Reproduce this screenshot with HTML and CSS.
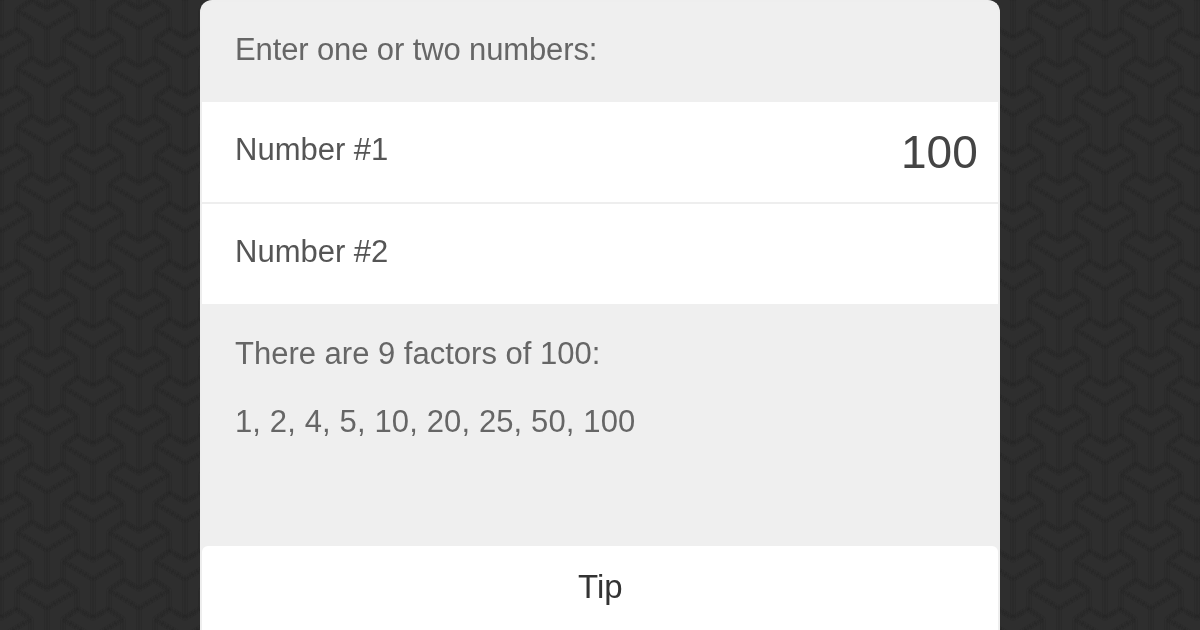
FILE: index.html
```html
<!DOCTYPE html>
<html lang="en">
<head>
<meta charset="utf-8">
<title>Factors</title>
<link rel="stylesheet" href="styles.css">
</head>
<body>
<main class="card">
  <header class="section head"><p class="note note-enter">Enter one or two numbers:</p></header>
  <div class="row row-line"><label class="label">Number #1</label><span class="value">100</span></div>
  <div class="row"><label class="label">Number #2</label></div>
  <section class="section result">
    <p class="note">There are 9 factors of 100:</p>
    <p class="note list">1, 2, 4, 5, 10, 20, 25, 50, 100</p>
  </section>
  <div class="tip"><span class="tip-text">Tip</span></div>
</main>
</body>
</html>
```
FILE: styles.css
```css
html, body { margin: 0; height: 630px; overflow: hidden; }
body {
  font-family: "Liberation Sans", Arial, sans-serif;
  background-color: #2e2e2e;
  background-image: url("data:image/svg+xml,%3Csvg xmlns='http://www.w3.org/2000/svg' xmlns:xlink='http://www.w3.org/1999/xlink' width='92' height='58' viewBox='0 0 92 58'%3E%3Cdefs%3E%3Cfilter id='b' filterUnits='userSpaceOnUse' x='-100' y='-100' width='300' height='300'%3E%3CfeGaussianBlur stdDeviation='0.9'/%3E%3C/filter%3E%3Cpath id='t' d='M0 0L-30 -18M0 0L30 -18M0 0V38M-30 -18V1M30 -18V1M-30 -18L-15 -28L0 -19L15 -28L30 -18'/%3E%3C/defs%3E%3Cg fill='none' stroke='%23252525' stroke-width='2' filter='url(%23b)'%3E%3Cuse href='%23t' x='47' y='28'/%3E%3Cuse href='%23t' x='-45' y='28'/%3E%3Cuse href='%23t' x='139' y='28'/%3E%3Cuse href='%23t' x='47' y='-30'/%3E%3Cuse href='%23t' x='-45' y='-30'/%3E%3Cuse href='%23t' x='139' y='-30'/%3E%3Cuse href='%23t' x='47' y='86'/%3E%3Cuse href='%23t' x='-45' y='86'/%3E%3Cuse href='%23t' x='139' y='86'/%3E%3Cuse href='%23t' x='1' y='-1'/%3E%3Cuse href='%23t' x='93' y='-1'/%3E%3Cuse href='%23t' x='1' y='57'/%3E%3Cuse href='%23t' x='93' y='57'/%3E%3Cuse href='%23t' x='1' y='115'/%3E%3Cuse href='%23t' x='93' y='115'/%3E%3C/g%3E%3C/svg%3E");
}
p { margin: 0; }
.card {
  box-sizing: border-box;
  width: 800px;
  height: 630px;
  margin: 0 auto;
  border: solid #eee;
  border-width: 2px 2px 0;
  border-radius: 12px 12px 0 0;
  background: #efefef;
  overflow: hidden;
  display: flex;
  flex-direction: column;
}
.section { color: #666; font-size: 31px; padding: 0 33px; }
.note { line-height: 34px; will-change: transform; }
.note-enter { letter-spacing: -0.12px; }
.head { height: 100px; padding-top: 31px; box-sizing: border-box; }
.row {
  height: 100px;
  box-sizing: border-box;
  display: flex;
  align-items: center;
  justify-content: space-between;
  padding: 0 20px 4px 33px;
  color: #555;
  background: #fff;
}
.row-line { border-bottom: 2px solid #eee; height: 102px; padding-bottom: 4px; }
.label { font-size: 31px; will-change: transform; }
.value { font-size: 46px; color: #444; padding-top: 3px; will-change: transform; }
.result { height: 242px; padding-top: 33px; box-sizing: border-box; }
.list { margin-top: 34px; letter-spacing: 0.13px; }
.tip {
  flex: 1;
  text-align: center;
  font-size: 33px;
  line-height: 82px;
  color: #333;
  background: #fff;
  border-radius: 6px 6px 0 0;
}
.tip-text { display: inline-block; will-change: transform; }
```
